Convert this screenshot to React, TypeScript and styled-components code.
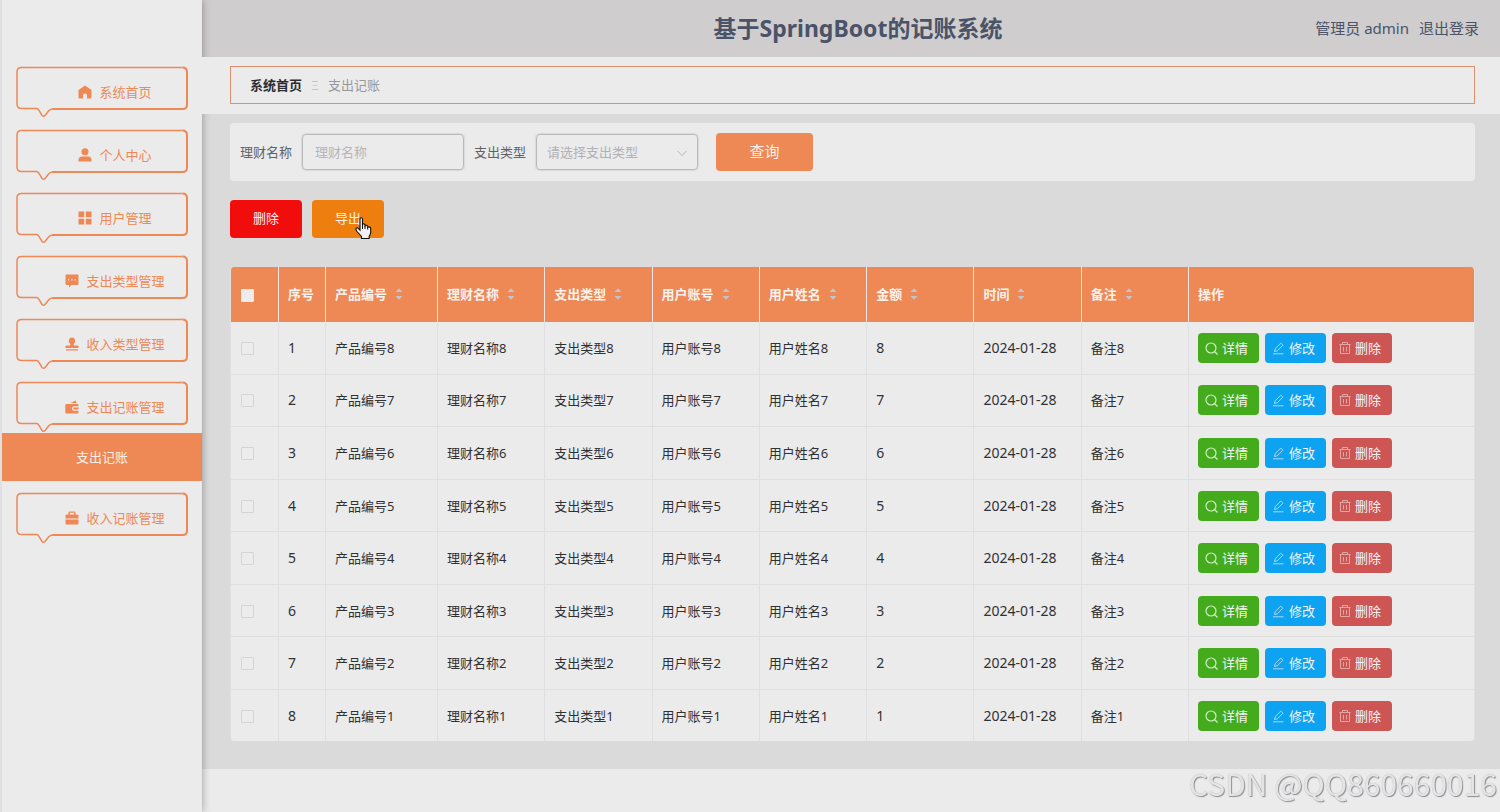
import React from "react";
import styled, { createGlobalStyle } from "styled-components";

const ORANGE = "#ee8855";
const PANEL = "#ebebec";

const GlobalStyle = createGlobalStyle`
  *, *::before, *::after { box-sizing: border-box; }
  body {
    margin: 0;
    background: ${PANEL};
    color: #333;
    font-family: "Noto Sans", "Noto Sans CJK SC", sans-serif;
    font-size: 13px;
    line-height: 20px;
  }
  button, input, select { font: inherit; margin: 0; }
  a { color: inherit; text-decoration: none; }
`;

const Page = styled.div`
  display: flex;
  min-height: 100vh;
`;

const Sidebar = styled.nav`
  position: relative;
  z-index: 1;
  flex: 0 0 202px;
  padding-top: 55px;
  border-left: 2px solid #e0e0e2;
  background: ${PANEL};
  box-shadow: 0 0 8px rgba(0, 0, 0, 0.35);
`;

const MenuList = styled.ul`
  margin: 0;
  padding: 0;
  list-style: none;
`;

const MenuItem = styled.li`
  padding-top: 11px;
`;

const MenuLink = styled.a`
  position: relative;
  display: flex;
  align-items: center;
  justify-content: center;
  gap: 7px;
  height: 52px;
  margin: 0 14px;
  padding-left: 26px;
  color: ${ORANGE};
`;

const BubbleSvg = styled.svg`
  position: absolute;
  inset: 0;
  pointer-events: none;
`;

const SubLink = styled.a`
  display: flex;
  align-items: center;
  justify-content: center;
  height: 48px;
  background: ${ORANGE};
  color: #f7efe9;
`;

const Content = styled.div`
  flex: 1;
  min-width: 0;
`;

const Header = styled.header`
  display: grid;
  grid-template-columns: 1fr auto 1fr;
  align-items: center;
  height: 57px;
  padding: 0 21px 2px 35px;
  background: #cfcdce;
  color: #4a5367;
`;

const Title = styled.h1`
  grid-column: 2;
  margin: 0;
  font-size: 23px;
  line-height: 32px;
  font-weight: 700;
`;

const Account = styled.div`
  display: flex;
  justify-content: flex-end;
  gap: 10px;
  font-size: 15px;
`;

const CrumbBar = styled.div`
  position: relative;
  z-index: 2;
  padding: 9px 25px 10px 28px;
  background: ${PANEL};
`;

const Crumbs = styled.div`
  display: flex;
  align-items: center;
  gap: 9px;
  height: 38px;
  padding: 0 19px;
  border: 1px solid #dd8f70;
  color: #97989b;
`;

const CrumbHome = styled.a`
  color: #2c2d30;
  font-weight: 700;
`;

const CrumbMark = styled.span`
  color: #bcbdc1;
  font-weight: 300;
`;

const Main = styled.main`
  padding: 9px 25px 28px 28px;
  background: #dadadb;
`;

const SearchForm = styled.form`
  display: flex;
  align-items: center;
  height: 58px;
  padding: 0 10px;
  border-radius: 4px;
  background: ${PANEL};
  color: #606266;
`;

const Field = styled.div`
  display: flex;
  align-items: center;
  gap: 10px;
  margin-right: 10px;
`;

const fieldBox = `
  width: 162px;
  height: 36px;
  border: 1px solid #b9babe;
  border-radius: 4px;
  background: transparent;
  outline: none;
  box-shadow: 0 0 2px rgba(100, 100, 110, 0.4);
`;

const TextInput = styled.input`
  ${fieldBox}
  padding: 0 12px;
  color: #606266;
  &::placeholder { color: #b4b5b9; opacity: 1; }
`;

const SelectWrap = styled.div`
  position: relative;
`;

const Select = styled.select`
  ${fieldBox}
  appearance: none;
  padding: 0 10px;
  color: #b0b1b5;
`;

const Chevron = styled.svg`
  position: absolute;
  right: 10px;
  top: 13px;
  pointer-events: none;
`;

const ActionButton = styled.button<{ $bg: string; $width?: number }>`
  position: relative;
  width: ${(p) => p.$width ?? 72}px;
  height: 38px;
  padding: 0 0 2px;
  border: 0;
  border-radius: 4px;
  background: ${(p) => p.$bg};
  color: #f8f1ec;
  cursor: pointer;
`;

const QueryButton = styled(ActionButton)`
  margin-left: 8px;
  font-size: 15px;
`;

const Toolbar = styled.div`
  display: flex;
  gap: 10px;
  padding: 19px 0 29px;
`;

const Cursor = styled.svg`
  position: absolute;
  left: 43px;
  top: 17px;
  pointer-events: none;
`;

const Table = styled.table`
  width: 100%;
  height: 474px;
  table-layout: fixed;
  border-collapse: separate;
  border-spacing: 0;
  border: 0 solid #dfdfe1;
  border-width: 0 1px;
  border-radius: 4px;
  overflow: hidden;
  background: ${PANEL};
`;

const Col = styled.col<{ $width?: number }>`
  width: ${(p) => (p.$width ? `${p.$width}px` : "auto")};
`;

const Th = styled.th`
  height: 55px;
  padding: 0 9px 2px;
  border-right: 1px solid #f0e6e1;
  background: ${ORANGE};
  color: #f8f1ec;
  font-weight: 700;
  text-align: left;
  &:last-child { border-right: 0; }
`;

const ThInner = styled.span`
  display: flex;
  align-items: center;
  gap: 8px;
`;

const Td = styled.td`
  padding: 0 9px;
  border-right: 1px solid #dfdfe2;
  border-bottom: 1px solid #dfdfe2;
  color: #303133;
  &:last-child { border-right: 0; }
  tr:last-child > & { border-bottom: 0; }
`;

const NumberTd = styled(Td)`
  font-size: 14px;
`;

const CheckBox = styled.input<{ $head?: boolean }>`
  appearance: none;
  display: block;
  width: 13px;
  height: 13px;
  margin: ${(p) => (p.$head ? "3px 0 0 1px" : "1px 0 0 1px")};
  border: 1px solid ${(p) => (p.$head ? "#efe9e6" : "#d3d4d8")};
  border-radius: 1px;
  background: #ececed;
`;

const RowActions = styled.div`
  display: flex;
  gap: 6px;
`;

const RowButton = styled.button<{ $bg: string }>`
  display: flex;
  align-items: center;
  gap: 4px;
  height: 30px;
  padding: 0 11px 0 7px;
  border: 0;
  border-radius: 4px;
  background: ${(p) => p.$bg};
  color: #f4f4f4;
  cursor: pointer;
`;

const Watermark = styled.div`
  position: fixed;
  right: 3px;
  bottom: 9px;
  z-index: 3;
  color: #e4e4e5;
  font-family: "Noto Sans CJK SC", sans-serif;
  font-size: 30px;
  line-height: 40px;
  text-shadow: 1px 1px 1px #8d8d91, 0 0 1px #b0b0b3;
  pointer-events: none;
`;

function Bubble() {
  return (
    <BubbleSvg width="172" height="52" viewBox="0 0 172 52" fill="none" aria-hidden="true">
      <path
        d="M36 43H166.500Q171 43 171 38.500V6Q171 1.500 166.500 1.500"
        stroke={ORANGE}
        strokeWidth="2"
      />
      <path
        d="M166.500 1.500H5.500Q1 1.500 1 6V38Q1 42.500 5.500 42.500H20.500Q22 42.500 23 44.500L26 49.500Q27.500 51 29 49.500L33 44.500Q34.500 43 37 43"
        stroke={ORANGE}
        strokeWidth="1.500"
      />
    </BubbleSvg>
  );
}

type IconName = "home" | "user" | "grid" | "comment" | "stamp" | "wallet" | "case";

const menuShapes: Record<IconName, React.ReactNode> = {
  home: <path d="M7 0.500L13.500 5V12.500Q13.500 13.500 12.500 13.500H9V10.500Q9 8.500 7 8.500T5 10.500V13.500H1.500Q0.500 13.500 0.500 12.500V5Z" />,
  user: (
    <>
      <circle cx="7" cy="3.800" r="3.500" />
      <path d="M0.500 13.500V12Q0.500 8.500 4 8.500H10Q13.500 8.500 13.500 12V13.500Z" />
    </>
  ),
  grid: <path d="M0.500 0.500H6.200V6.200H0.500ZM7.800 0.500H13.500V6.200H7.800ZM0.500 7.800H6.200V13.500H0.500ZM7.800 7.800H13.500V13.500H7.800Z" />,
  comment: (
    <path
      fillRule="evenodd"
      d="M1.500 0.500H12.500Q13.500 0.500 13.500 1.500V10Q13.500 11 12.500 11H6.500L4 13.500V11H1.500Q0.500 11 0.500 10V1.500Q0.500 0.500 1.500 0.500ZM3 5.300V6.500H4.300V5.300ZM6.300 5.300V6.500H7.600V5.300ZM9.600 5.300V6.500H10.900V5.300Z"
    />
  ),
  stamp: (
    <path d="M7 0.500A3.400 3.400 0 0 1 9.300 6.300Q8.500 7.300 8.700 8.600H12.500Q13.500 8.600 13.500 9.600V11H0.500V9.600Q0.500 8.600 1.500 8.600H5.300Q5.500 7.300 4.700 6.300A3.400 3.400 0 0 1 7 0.500ZM1 12.200H13V13.500H1Z" />
  ),
  wallet: (
    <path d="M5.500 3L10.500 0.500L11.700 3ZM1.200 4H12.500Q13.500 4 13.500 5V6.300H9Q7 6.300 7 8.500T9 10.700H13.500V12.500Q13.500 13.500 12.500 13.500H1.200Q0.300 13.500 0.300 12.500V5Q0.300 4 1.200 4ZM9 7.600H13.500V9.400H9Q8.200 9.400 8.200 8.500T9 7.600Z" />
  ),
  case: (
    <path
      fillRule="evenodd"
      d="M4.500 0.500H9.500Q10.500 0.500 10.500 1.500V3.500H12.500Q13.500 3.500 13.500 4.500V7.500H0.500V4.500Q0.500 3.500 1.500 3.500H3.500V1.500Q3.500 0.500 4.500 0.500ZM4.800 1.800V3.500H9.200V1.800ZM0.500 8.500H13.500V12.500Q13.500 13.500 12.500 13.500H1.500Q0.500 13.500 0.500 12.500Z"
    />
  ),
};

function MenuIcon({ name }: { name: IconName }) {
  return (
    <svg width="14" height="14" viewBox="0 0 14 14" fill={ORANGE} aria-hidden="true">
      {menuShapes[name]}
    </svg>
  );
}

function SortIcon() {
  return (
    <svg width="8" height="12" viewBox="0 0 8 12" fill="#c0c4cc" aria-hidden="true">
      <path d="M0.500 4L4 0.300L7.500 4ZM0.500 8H7.500L4 11.700Z" />
    </svg>
  );
}

function SearchIcon() {
  return (
    <svg width="13" height="14" viewBox="0 0 13 14" fill="none" stroke="#d3ecc8" strokeWidth="1.200" aria-hidden="true">
      <circle cx="6" cy="7" r="5" />
      <path d="M9.500 10.500L12.500 13.500" />
    </svg>
  );
}

function EditIcon() {
  return (
    <svg width="13" height="14" viewBox="0 0 13 14" fill="none" stroke="#a9d9f2" aria-hidden="true">
      <path d="M2.500 10.500L3.200 7.700L8.800 2.100L10.900 4.200L5.300 9.800ZM1 12.800H11.500" />
    </svg>
  );
}

function TrashIcon() {
  return (
    <svg width="12" height="14" viewBox="0 0 12 14" fill="none" stroke="#e2a6a4" aria-hidden="true">
      <path d="M0.500 3.500H11.500M3.500 3.500V1.500H8.500V3.500M1.500 3.500V12.500H10.500V3.500M4.500 6V10.500M7.500 6V10.500" />
    </svg>
  );
}

function HandCursor() {
  return (
    <Cursor width="17" height="23" viewBox="0 0 17 23" aria-hidden="true">
      <path
        d="M5 2Q5 0.700 6.200 0.700T7.500 2V8.500V7.300Q8.700 6.300 10 7.500V9Q11.500 7.500 12.700 9V10.200Q14.500 9.200 15.700 11V15.500Q15.500 17.500 14.200 19V21.500H6.500V19.500L2 14.500Q0.300 12.200 1.300 11.200T3.500 11.700L5 13.200Z"
        fill="#f2f2f2"
        stroke="#111"
        strokeWidth="1.100"
      />
      <path d="M7.500 8V12M10 9V12M12.700 10V12.500" stroke="#111" />
    </Cursor>
  );
}

const menu: { label: string; icon: IconName; child?: string }[] = [
  { label: "系统首页", icon: "home" },
  { label: "个人中心", icon: "user" },
  { label: "用户管理", icon: "grid" },
  { label: "支出类型管理", icon: "comment" },
  { label: "收入类型管理", icon: "stamp" },
  { label: "支出记账管理", icon: "wallet", child: "支出记账" },
  { label: "收入记账管理", icon: "case" },
];

const sortable = ["产品编号", "理财名称", "支出类型", "用户账号", "用户姓名", "金额", "时间", "备注"];
const records = [8, 7, 6, 5, 4, 3, 2, 1];

export default function App() {
  return (
    <>
      <GlobalStyle />
      <Page>
        <Sidebar>
          <MenuList>
            {menu.map((m) => (
              <MenuItem key={m.label}>
                <MenuLink href="#">
                  <Bubble />
                  <MenuIcon name={m.icon} />
                  {m.label}
                </MenuLink>
                {m.child && <SubLink href="#">{m.child}</SubLink>}
              </MenuItem>
            ))}
          </MenuList>
        </Sidebar>
        <Content>
          <Header>
            <Title>基于SpringBoot的记账系统</Title>
            <Account>
              <span>管理员 admin</span>
              <a href="#">退出登录</a>
            </Account>
          </Header>
          <CrumbBar>
            <Crumbs>
              <CrumbHome href="#">系统首页</CrumbHome>
              <CrumbMark>Ξ</CrumbMark>
              <span>支出记账</span>
            </Crumbs>
          </CrumbBar>
          <Main>
            <SearchForm onSubmit={(e) => e.preventDefault()}>
              <Field>
                <label htmlFor="name">理财名称</label>
                <TextInput id="name" placeholder="理财名称" />
              </Field>
              <Field>
                <label htmlFor="type">支出类型</label>
                <SelectWrap>
                  <Select id="type" defaultValue="">
                    <option value="">请选择支出类型</option>
                  </Select>
                  <Chevron width="12" height="12" viewBox="0 0 12 12" fill="none" stroke="#b4b5b9" aria-hidden="true">
                    <path d="M1.500 4L6 8.500L10.500 4" />
                  </Chevron>
                </SelectWrap>
              </Field>
              <QueryButton type="submit" $bg={ORANGE} $width={97}>
                查询
              </QueryButton>
            </SearchForm>
            <Toolbar>
              <ActionButton type="button" $bg="#f20d0d">
                删除
              </ActionButton>
              <ActionButton type="button" $bg="#ee7f0e">
                导出
                <HandCursor />
              </ActionButton>
            </Toolbar>
            <Table>
              <colgroup>
                <Col $width={48} />
                <Col $width={47} />
                <Col $width={112} />
                {sortable.slice(1).map((s) => (
                  <Col key={s} />
                ))}
                <Col $width={285} />
              </colgroup>
              <thead>
                <tr>
                  <Th>
                    <CheckBox type="checkbox" aria-label="全选" $head />
                  </Th>
                  <Th>序号</Th>
                  {sortable.map((s) => (
                    <Th key={s}>
                      <ThInner>
                        {s}
                        <SortIcon />
                      </ThInner>
                    </Th>
                  ))}
                  <Th>操作</Th>
                </tr>
              </thead>
              <tbody>
                {records.map((n, i) => (
                  <tr key={n}>
                    <Td>
                      <CheckBox type="checkbox" aria-label={`选择第${i + 1}行`} />
                    </Td>
                    <NumberTd>{i + 1}</NumberTd>
                    <Td>产品编号{n}</Td>
                    <Td>理财名称{n}</Td>
                    <Td>支出类型{n}</Td>
                    <Td>用户账号{n}</Td>
                    <Td>用户姓名{n}</Td>
                    <NumberTd>{n}</NumberTd>
                    <NumberTd>2024-01-28</NumberTd>
                    <Td>备注{n}</Td>
                    <Td>
                      <RowActions>
                        <RowButton type="button" $bg="#44ab1d">
                          <SearchIcon />
                          详情
                        </RowButton>
                        <RowButton type="button" $bg="#0ea3f0">
                          <EditIcon />
                          修改
                        </RowButton>
                        <RowButton type="button" $bg="#cd5654">
                          <TrashIcon />
                          删除
                        </RowButton>
                      </RowActions>
                    </Td>
                  </tr>
                ))}
              </tbody>
            </Table>
          </Main>
        </Content>
      </Page>
      <Watermark>CSDN @QQ860660016</Watermark>
    </>
  );
}
